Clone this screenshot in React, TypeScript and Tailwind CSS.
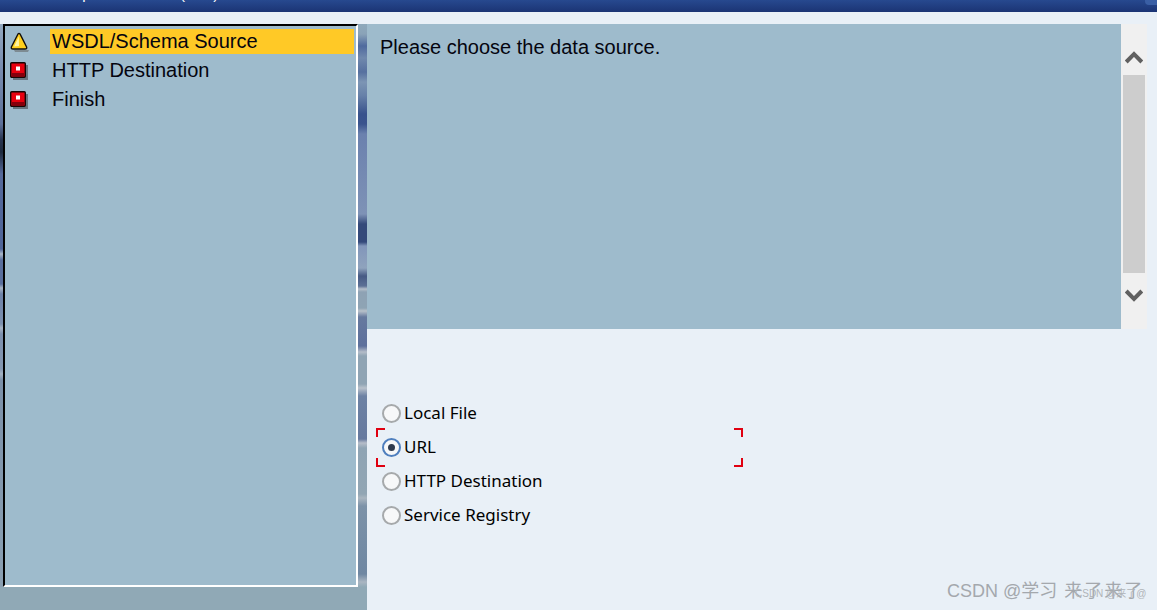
import React from "react";

function Triangle() {
  return (
    <svg width="22" height="22" viewBox="0 0 22 22">
      <path d="M6 19 L21 19 L20 21 L7 21 Z" fill="#7d8b92" />
      <path d="M10 3 L3.4 16 Q2.8 18 5 18 L17 18 Q19.2 18 18.6 16 L12 3 Q11 1.8 10 3 Z" fill="#ffcf1c" stroke="#14100a" strokeWidth="1.4" />
      <path d="M10.8 5.5 L6 15.5 L11 15 Z" fill="#fff3a0" />
    </svg>
  );
}

function RedSquare() {
  return (
    <svg width="22" height="22" viewBox="0 0 22 22">
      <rect x="5" y="5" width="15" height="15" fill="#67757f" />
      <rect x="2.7" y="2.7" width="14.6" height="14.6" rx="1" fill="#e8000f" stroke="#170606" strokeWidth="1.4" />
      <rect x="4" y="13" width="12" height="3.6" fill="#86000c" />
      <rect x="8" y="6.5" width="4" height="4" fill="#ffffff" />
    </svg>
  );
}

function Step({ label, active, icon }: { label: string; active?: boolean; icon: React.ReactNode }) {
  return (
    <div className="flex h-[29px] items-center">
      <div className="flex w-[45px] shrink-0 pl-[3px]">{icon}</div>
      <div className={"flex h-[25px] flex-1 items-center pb-[1px] pl-[2px] " + (active ? "bg-[#ffc926]" : "")}>{label}</div>
    </div>
  );
}

function Radio({ label, checked }: { label: string; checked?: boolean }) {
  return (
    <div className="flex h-[34px] items-center">
      <span
        className={
          "flex h-[19px] w-[19px] shrink-0 items-center justify-center rounded-full border-2 bg-[#f7f8f9] " +
          (checked ? "border-[#4f7fbe]" : "border-[#a6a9ab]")
        }
      >
        {checked ? <span className="h-[7px] w-[7px] rounded-full bg-[#2f3a4e]" /> : null}
      </span>
      <span className="ml-[3px]">{label}</span>
    </div>
  );
}

export default function App() {
  return (
    <div className="flex h-[610px] w-[1157px] flex-col overflow-hidden bg-[#e9f0f7] font-['Liberation_Sans',sans-serif] text-black">
      <div className="relative h-[12px] shrink-0 overflow-hidden bg-[linear-gradient(#27498f,#1b3474)]">
        <div className="mt-[-15px] pl-[66px] text-[15px] leading-[17px] tracking-[1.9px] text-white">Input Source (1/3)</div>
        <div className="absolute right-0 top-0 h-[5px] w-[12px] rounded-bl-sm bg-[#3a5fa5]" />
      </div>

      <div className="mt-[12px] flex min-h-0 flex-1">
        <div className="flex w-[367px] shrink-0 flex-col bg-[#90a9b6]">
          <div className="flex h-[563px]">
            <div className="w-[3px] bg-[linear-gradient(#93a9bf_0px,#7c8fb0_40px,#5d7099_100px,#28344f_116px,#1e2a3e_128px,#56699a_150px,#4f6498_225px,#aab6c8_230px,#5a6e9c_236px,#5a6e9c_260px,#a8b4c4_264px,#6e82a8_270px,#7d90ae_300px,#a8b4c4_304px,#7d90ae_310px,#8597b0_345px,#a4b2c2_350px,#7c90a8_356px,#8ba0b2_563px)]" />
            <div className="w-[355px] border-2 border-b-white border-l-black border-r-white border-t-black bg-[#9ebbcc] pr-[2px] pt-[1px] text-[20px] text-[#05050f]">
              <Step label="WSDL/Schema Source" active icon={<Triangle />} />
              <Step label="HTTP Destination" icon={<RedSquare />} />
              <Step label="Finish" icon={<RedSquare />} />
            </div>
            <div className="w-[9px] bg-[linear-gradient(#8ea9bb_0px,#8aa3b8_10px,#4f6a9e_22px,#7089ad_34px,#56709f_48px,#7c95b4_58px,#6680a8_72px,#38528c_90px,#3a548e_100px,#6b81ae_110px,#7e92b6_190px,#34497a_200px,#34497a_218px,#8296ba_222px,#8fa3bd_244px,#465a84_252px,#5c7095_262px,#b4bec9_265px,#8ea2b4_268px,#8ea4b4_284px,#b8c1ca_287px,#66799e_293px,#5d709c_322px,#b4bdc9_328px,#8fa4b4_332px,#8fa4b4_360px,#b8c1cb_364px,#6d82a4_372px,#66799e_415px,#b6bdc9_419px,#8fa4b4_424px,#92a6b4_470px,#aab6c0_474px,#7c92a8_482px,#6f87a2_550px,#aab6c2_558px,#90a9b6_563px)]" />
          </div>
        </div>

        <div className="flex min-w-0 flex-1 flex-col">
          <div className="flex h-[305px] shrink-0">
            <div className="w-[754px] bg-[#9ebbcc] pl-[13px] pt-[11px] text-[20px] leading-[24px] text-[#05050f]">
              Please choose the data source.
            </div>
            <div className="flex w-[26px] flex-col items-center bg-[#f0f0f0]">
              <div className="flex h-[51px] w-full items-center justify-center pt-[15px]">
                <svg width="18" height="14" viewBox="0 0 18 14">
                  <path d="M1.2 12 L9 4 L16.8 12" fill="none" stroke="#606060" strokeWidth="4" />
                </svg>
              </div>
              <div className="h-[198px] w-[22px] bg-[#cdcdcd]" />
              <div className="flex h-[56px] w-full items-center justify-center pb-[10px]">
                <svg width="18" height="14" viewBox="0 0 18 14">
                  <path d="M1.2 2 L9 10 L16.8 2" fill="none" stroke="#606060" strokeWidth="4" />
                </svg>
              </div>
            </div>
          </div>

          <div className="relative flex flex-col pl-[15px] pt-[67px] font-['Noto_Sans',sans-serif] text-[17px]">
            <Radio label="Local File" />
            <Radio label="URL" checked />
            <Radio label="HTTP Destination" />
            <Radio label="Service Registry" />
            <span className="absolute left-[9px] top-[99px] h-[9px] w-[9px] border-l-2 border-t-2 border-[#e00010]" />
            <span className="absolute left-[9px] top-[129px] h-[9px] w-[9px] border-b-2 border-l-2 border-[#e00010]" />
            <span className="absolute left-[367px] top-[99px] h-[9px] w-[9px] border-r-2 border-t-2 border-[#e00010]" />
            <span className="absolute left-[367px] top-[129px] h-[9px] w-[9px] border-b-2 border-r-2 border-[#e00010]" />
          </div>
        </div>
      </div>

      <div className="absolute left-[947px] top-[579px] font-['Liberation_Sans','Noto_Sans_CJK_SC',sans-serif] text-[18px] leading-[24px] text-[#a4a8ad]">
        CSDN @学习<span className="tracking-[2px]"> 来了来了</span>
      </div>
      <div className="absolute left-[1075px] top-[587px] font-['Liberation_Sans','Noto_Sans_CJK_SC',sans-serif] text-[10px] leading-[13px] text-[#b0b4b8]">
        CSDN @来了@
      </div>
    </div>
  );
}
